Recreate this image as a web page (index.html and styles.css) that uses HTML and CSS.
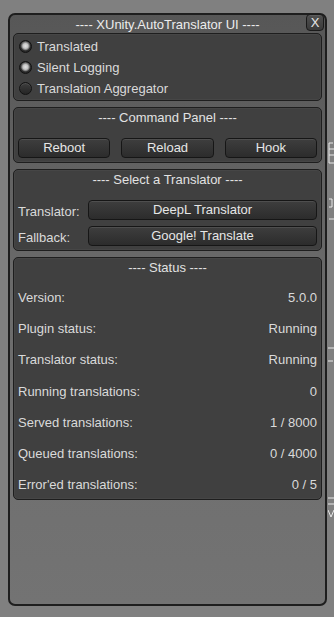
FILE: index.html
```html
<!DOCTYPE html>
<html>
<head>
    <title>XUnity.AutoTranslator UI</title>
    <link rel="stylesheet" href="styles.css">
</head>
<body>
    <div id="window">
        <div class="window-title">
            <span>---- XUnity.AutoTranslator UI ----</span>
            <button class="close-button">X</button>
        </div>

        <div class="box toggles">
            <div class="toggle"><span class="radio checked"></span>Translated</div>
            <div class="toggle"><span class="radio checked"></span>Silent Logging</div>
            <div class="toggle"><span class="radio"></span>Translation Aggregator</div>
        </div>

        <div class="box">
            <div class="box-title">---- Command Panel ----</div>
            <div class="command-row">
                <button class="btn">Reboot</button>
                <button class="btn">Reload</button>
                <button class="btn">Hook</button>
            </div>
        </div>

        <div class="box">
            <div class="box-title">---- Select a Translator ----</div>
            <div class="select-rows">
                <div class="select-row">
                    <span class="select-label">Translator:</span>
                    <button class="btn">DeepL Translator</button>
                </div>
                <div class="select-row">
                    <span class="select-label">Fallback:</span>
                    <button class="btn">Google! Translate</button>
                </div>
            </div>
        </div>

        <div class="box">
            <div class="box-title">---- Status ----</div>
            <div class="status-rows">
                <div class="status-row"><span>Version:</span><span>5.0.0</span></div>
                <div class="status-row"><span>Plugin status:</span><span>Running</span></div>
                <div class="status-row"><span>Translator status:</span><span>Running</span></div>
                <div class="status-row"><span>Running translations:</span><span>0</span></div>
                <div class="status-row"><span>Served translations:</span><span>1 / 8000</span></div>
                <div class="status-row"><span>Queued translations:</span><span>0 / 4000</span></div>
                <div class="status-row"><span>Error'ed translations:</span><span>0 / 5</span></div>
            </div>
        </div>
    </div>

    <!-- bits of the game scene behind the window -->
    <svg class="scene" width="6" height="617" viewBox="0 0 6 617">
        <g stroke="#e8e8e8" stroke-width="1" fill="none">
            <path d="M1 143h4M1 149h5M1 155h5M1 143v20M1 163h5"/>
            <path d="M1 199h3v8h-3M1 219h5"/>
            <path d="M0 348h6M0 361h5"/>
            <path d="M0 498h6M0 504h6"/>
            <path d="M0 510l3 7l3-7"/>
        </g>
    </svg>
</body>
</html>
```

FILE: styles.css
```css
body {
    margin: 0;
    padding: 0;
    width: 334px;
    height: 617px;
    overflow: hidden;
    background-color: #808080;
    font-family: "Liberation Sans", Arial, sans-serif;
    font-size: 13px;
    color: #dadada;
}

#window {
    box-sizing: border-box;
    width: 319px;
    height: 593px;
    margin: 13px 0 0 8px;
    padding: 0 3px;
    border: 2px solid #1e1e1e;
    border-radius: 7px;
    background: linear-gradient(#575757, #6c6c6c 50%, #737373);
    display: flex;
    flex-direction: column;
    gap: 6px;
}

.window-title {
    position: relative;
    height: 18px;
    line-height: 20px;
    text-align: center;
    color: #ececec;
    margin-bottom: -6px;
}

.close-button {
    position: absolute;
    top: -1px;
    right: -2px;
    width: 18px;
    height: 17px;
    padding: 0;
    border: 1px solid #1a1a1a;
    border-radius: 4px;
    background: linear-gradient(#505050, #3a3a3a);
    box-shadow: inset 0 1px 0 rgba(255, 255, 255, 0.08);
    color: #e6e6e6;
    font-family: inherit;
    font-size: 13px;
    line-height: 15px;
}

.box {
    border: 1px solid #1e1e1e;
    border-radius: 5px;
    background-color: #404040;
    box-shadow: inset 0 0 0 1px rgba(255, 255, 255, 0.03);
    padding: 0 4px 4px;
}

.toggles {
    padding: 2px 5px 1px;
}

.toggle {
    display: flex;
    align-items: center;
    height: 21px;
    gap: 5px;
}

.radio {
    box-sizing: border-box;
    width: 13px;
    height: 13px;
    border-radius: 50%;
    border: 1px solid #121212;
    background: linear-gradient(#3e3e3e, #252525);
    box-shadow: inset 0 1px 0 rgba(255, 255, 255, 0.1);
}

.radio.checked {
    background: radial-gradient(circle at 50% 45%, #e4e4e4 0, #c2c2c2 2.5px, #7a7a7a 3.8px, #2e2e2e 4.8px, #262626 6px);
}

.box-title {
    height: 20px;
    line-height: 20px;
    text-align: center;
    color: #e2e2e2;
}

.btn {
    box-sizing: border-box;
    height: 20px;
    padding: 0;
    border: 1px solid #161616;
    border-radius: 4px;
    background: linear-gradient(#3e3e3e, #2c2c2c);
    box-shadow: inset 0 1px 0 rgba(255, 255, 255, 0.09);
    color: #e6e6e6;
    font-family: inherit;
    font-size: 13px;
    line-height: 18px;
}

.command-row {
    display: flex;
    gap: 11px;
    margin-top: 10px;
}

.command-row .btn {
    flex: 1;
}

.select-rows {
    display: flex;
    flex-direction: column;
    gap: 6px;
    margin-top: 10px;
}

.select-row {
    display: flex;
    align-items: center;
}

.select-label {
    width: 70px;
    padding-top: 2px;
}

.select-row .btn {
    flex: 1;
}

.status-rows {
    display: flex;
    flex-direction: column;
    gap: 11.2px;
    margin-top: 10px;
}

.status-row {
    display: flex;
    justify-content: space-between;
    height: 20px;
    line-height: 20px;
}

.scene {
    position: absolute;
    top: 0;
    left: 328px;
}
```
